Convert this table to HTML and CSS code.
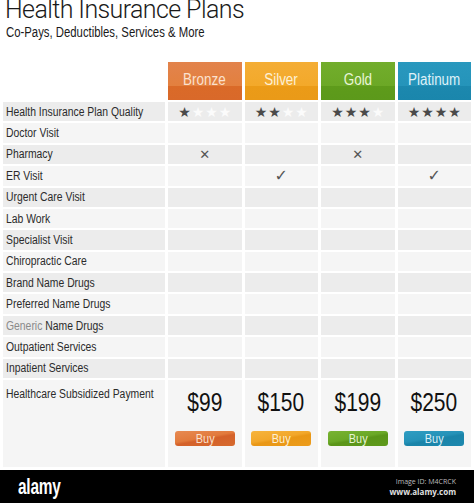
FILE: index.html
```html
<!DOCTYPE html>
<html>
<head>
<meta charset="utf-8">
<link rel="stylesheet" href="styles.css">
</head>
<body>
<div class="page">
  <header class="head">
    <h1 class="title">Health Insurance Plans</h1>
    <p class="subtitle"><span class="n">Co-Pays, Deductibles, Services &amp; More</span></p>
  </header>
  <div class="table">
    <div class="blank"></div>
    <div class="plan bronze"><span class="nc">Bronze</span></div>
    <div class="plan silver"><span class="nc">Silver</span></div>
    <div class="plan gold"><span class="nc">Gold</span></div>
    <div class="plan platinum"><span class="nc">Platinum</span></div>

    <div class="label dark"><span class="n">Health Insurance Plan Quality</span></div>
    <div class="cell dark"><span class="stars"><b>★</b><i>★★★</i></span></div>
    <div class="cell dark"><span class="stars"><b>★★</b><i>★★</i></span></div>
    <div class="cell dark"><span class="stars"><b>★★★</b><i>★</i></span></div>
    <div class="cell dark"><span class="stars"><b>★★★★</b></span></div>

    <div class="label light"><span class="n">Doctor Visit</span></div>
    <div class="cell light"></div><div class="cell light"></div><div class="cell light"></div><div class="cell light"></div>

    <div class="label dark"><span class="n">Pharmacy</span></div>
    <div class="cell dark"><span class="mark">✕</span></div>
    <div class="cell dark"></div>
    <div class="cell dark"><span class="mark">✕</span></div>
    <div class="cell dark"></div>

    <div class="label light"><span class="n">ER Visit</span></div>
    <div class="cell light"></div>
    <div class="cell light"><span class="mark check">✓</span></div>
    <div class="cell light"></div>
    <div class="cell light"><span class="mark check">✓</span></div>

    <div class="label dark"><span class="n">Urgent Care Visit</span></div>
    <div class="cell dark"></div><div class="cell dark"></div><div class="cell dark"></div><div class="cell dark"></div>

    <div class="label light"><span class="n">Lab Work</span></div>
    <div class="cell light"></div><div class="cell light"></div><div class="cell light"></div><div class="cell light"></div>

    <div class="label dark"><span class="n">Specialist Visit</span></div>
    <div class="cell dark"></div><div class="cell dark"></div><div class="cell dark"></div><div class="cell dark"></div>

    <div class="label light"><span class="n">Chiropractic Care</span></div>
    <div class="cell light"></div><div class="cell light"></div><div class="cell light"></div><div class="cell light"></div>

    <div class="label dark"><span class="n">Brand Name Drugs</span></div>
    <div class="cell dark"></div><div class="cell dark"></div><div class="cell dark"></div><div class="cell dark"></div>

    <div class="label light"><span class="n">Preferred Name Drugs</span></div>
    <div class="cell light"></div><div class="cell light"></div><div class="cell light"></div><div class="cell light"></div>

    <div class="label dark"><span class="n"><span class="faded">Generic</span> Name Drugs</span></div>
    <div class="cell dark"></div><div class="cell dark"></div><div class="cell dark"></div><div class="cell dark"></div>

    <div class="label light"><span class="n">Outpatient Services</span></div>
    <div class="cell light"></div><div class="cell light"></div><div class="cell light"></div><div class="cell light"></div>

    <div class="label dark"><span class="n">Inpatient Services</span></div>
    <div class="cell dark"></div><div class="cell dark"></div><div class="cell dark"></div><div class="cell dark"></div>

    <div class="label price-label"><span class="n">Healthcare Subsidized Payment</span></div>
    <div class="price-cell"><span class="price nc">$99</span><span class="buy bronze-btn"><span class="nc">Buy</span></span></div>
    <div class="price-cell"><span class="price nc">$150</span><span class="buy silver-btn"><span class="nc">Buy</span></span></div>
    <div class="price-cell"><span class="price nc">$199</span><span class="buy gold-btn"><span class="nc">Buy</span></span></div>
    <div class="price-cell"><span class="price nc">$250</span><span class="buy platinum-btn"><span class="nc">Buy</span></span></div>
  </div>
  <footer class="bar">
    <span class="logo nl">alamy</span>
    <span class="credit"><span class="id">Image ID: M4CRCK</span><span class="url">www.alamy.com</span></span>
  </footer>
</div>
</body>
</html>
```

FILE: styles.css
```css
html, body {
  margin: 0;
  padding: 0;
  background: #ffffff;
}
body {
  width: 474px;
  height: 503px;
  overflow: hidden;
  font-family: "Liberation Sans", Arial, sans-serif;
  color: #2b2b2b;
}
.n {
  display: inline-block;
  transform: scaleX(0.83);
  transform-origin: left center;
  white-space: nowrap;
}
.nc {
  display: inline-block;
  transform: scaleX(0.84);
  transform-origin: center center;
  white-space: nowrap;
}
.nl {
  display: inline-block;
  transform: scaleX(0.7);
  transform-origin: left center;
}
.page {
  display: flex;
  flex-direction: column;
  height: 503px;
}
.head {
  height: 62px;
  padding-left: 5px;
}
.title {
  margin: 0;
  font-family: Roboto, "Liberation Sans", sans-serif;
  font-weight: 300;
  font-size: 25px;
  line-height: 20px;
  letter-spacing: -0.6px;
  color: #1a1a1a;
  white-space: nowrap;
}
.subtitle {
  margin: 4px 0 0 0;
  padding-left: 1px;
  font-size: 14px;
  line-height: 16px;
  color: #1a1a1a;
}
.subtitle .n {
  transform: scaleX(0.81);
}
.table {
  display: grid;
  grid-template-columns: 162px repeat(4, 1fr);
  grid-template-rows: 38px repeat(13, 19.4px) 87px;
  column-gap: 3px;
  row-gap: 2px;
  padding: 0 3px;
}
.plan {
  display: flex;
  align-items: center;
  justify-content: center;
  font-size: 16px;
  padding-bottom: 2px;
}
.bronze {
  background: linear-gradient(#e2834c 0%, #e3803f 62%, #da6a28 62%, #d9692a 100%);
  color: #fbe1cf;
}
.silver {
  background: linear-gradient(#f4ad35 0%, #f3a92a 62%, #eb9b17 62%, #ea9a18 100%);
  color: #fdf0d6;
}
.gold {
  background: linear-gradient(#72ad2c 0%, #6ca826 62%, #5e9b1b 62%, #5c991b 100%);
  color: #e8f5d6;
}
.platinum {
  background: linear-gradient(#2998be 0%, #2594ba 62%, #1c88ae 62%, #1a86ac 100%);
  color: #dff1f8;
}
.label {
  display: flex;
  align-items: center;
  padding-left: 3px;
  font-size: 12.5px;
  color: #2b2b2b;
  white-space: nowrap;
  overflow: hidden;
}
.dark { background: #ececec; }
.light { background: #f5f5f5; }
.faded { color: #8a8a8a; }
.cell {
  display: flex;
  align-items: center;
  justify-content: center;
}
.stars {
  font-family: "DejaVu Sans", sans-serif;
  font-size: 14px;
  letter-spacing: 1px;
  margin-right: -1px;
}
.stars b { font-weight: normal; color: #4a4a4a; }
.stars i { font-style: normal; color: #fbfbfb; }
.mark {
  font-family: "DejaVu Sans", sans-serif;
  font-size: 13px;
  color: #555555;
}
.check {
  font-size: 16px;
  font-weight: bold;
}
.price-label {
  align-items: flex-start;
  padding-top: 7px;
  background: #f5f5f5;
}
.price-cell {
  background: #f5f5f5;
  display: flex;
  flex-direction: column;
  align-items: center;
  padding-top: 8px;
}
.price {
  font-size: 25px;
  line-height: 28px;
  color: #111111;
}
.buy {
  margin-top: 15px;
  width: 60px;
  height: 15px;
  border-radius: 3px;
  font-size: 13px;
  line-height: 15px;
  text-align: center;
}
.bronze-btn {
  background: linear-gradient(170deg, #e78a52 0%, #e27a3c 45%, #d4612a 55%, #d66a2e 100%);
  color: #fbe0cc;
}
.silver-btn {
  background: linear-gradient(170deg, #f6b43e 0%, #f2a72a 45%, #e99716 55%, #ec9c1c 100%);
  color: #fdf0d4;
}
.gold-btn {
  background: linear-gradient(170deg, #78b332 0%, #6aa826 45%, #5a9519 55%, #5f9a1c 100%);
  color: #e6f4d2;
}
.platinum-btn {
  background: linear-gradient(170deg, #2f9dc2 0%, #2592b8 45%, #1a84a9 55%, #1d88ae 100%);
  color: #dceff8;
}
.bar {
  margin-top: 3px;
  height: 33px;
  background: #000000;
  display: flex;
  align-items: center;
  justify-content: space-between;
  padding: 0 18px 0 18px;
}
.logo {
  font-family: "Liberation Sans", sans-serif;
  font-weight: bold;
  font-size: 22px;
  color: #ffffff;
  letter-spacing: -0.3px;
}
.credit {
  display: flex;
  flex-direction: column;
  align-items: flex-end;
  font-family: "Open Sans", "DejaVu Sans", sans-serif;
  line-height: 10px;
}
.id { font-size: 7px; color: #bdbdbd; }
.url { font-size: 8px; font-weight: bold; color: #e0e0e0; }
```
